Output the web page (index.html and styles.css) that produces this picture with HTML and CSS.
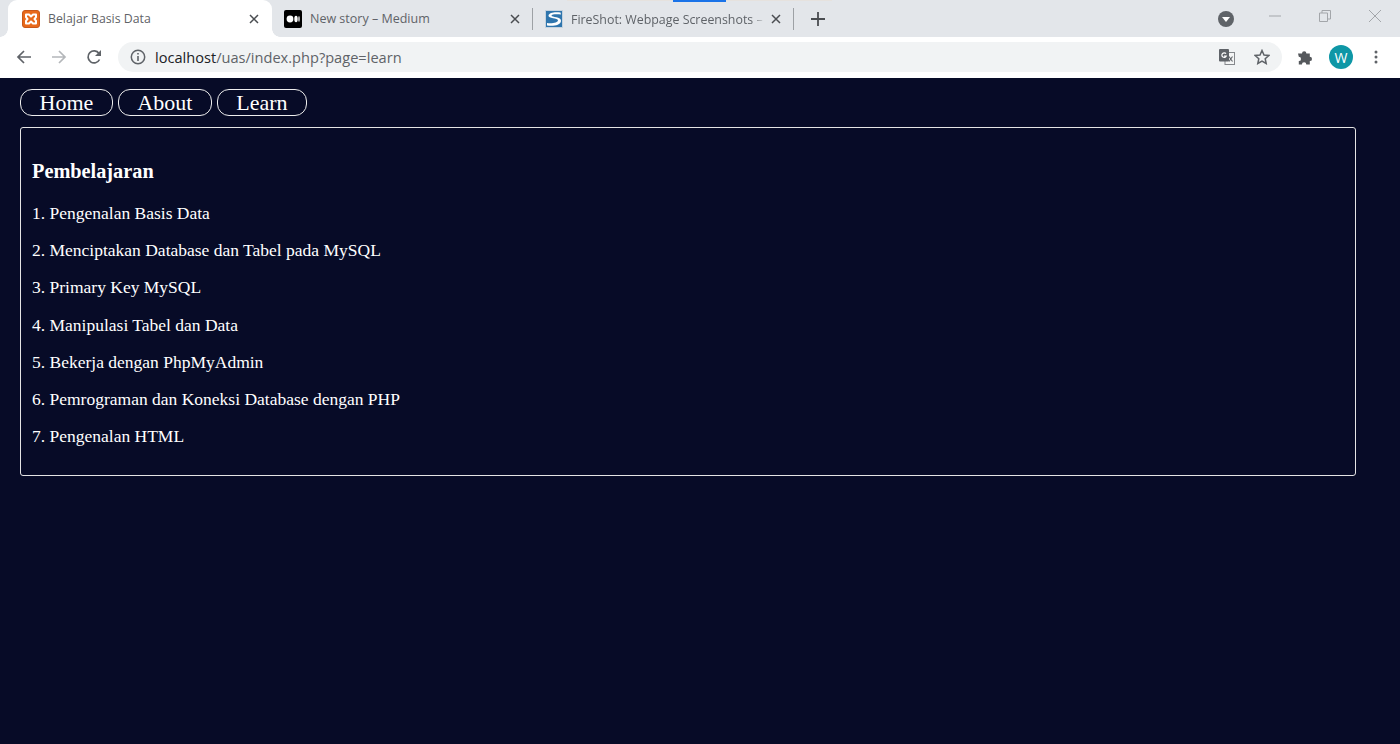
FILE: index.html
```html
<!DOCTYPE html>
<html lang="id">
<head>
<meta charset="utf-8">
<title>Belajar Basis Data</title>
<link rel="stylesheet" href="styles.css">
</head>
<body>
<header class="chrome">
  <div class="tabstrip">
    <div class="loadtrack"></div>
    <div class="loadbar"></div>
    <div class="tab active">
      <svg class="favicon" viewBox="0 0 18 18"><rect x=".5" y=".5" width="17" height="17" rx="2.500" fill="#e8691a" stroke="#c9581a"/><path d="M4 4.500h3l2 2 2-2h3v2.700L12.500 9l1.500 1.800v2.700h-3l-2-2-2 2H4v-2.700L5.500 9 4 7.200z" fill="none" stroke="#fff" stroke-width="2" stroke-linejoin="round"/></svg>
      <span class="tabtitle">Belajar Basis Data</span>
      <svg class="close" viewBox="0 0 10 10"><path d="M1 1l8 8M9 1l-8 8"/></svg>
    </div>
    <div class="tab medium">
      <svg class="favicon" viewBox="0 0 18 18"><rect width="18" height="18" rx="2" fill="#000"/><circle cx="6" cy="9" r="3.400" fill="#fff"/><ellipse cx="12" cy="9" rx="1.700" ry="3.200" fill="#fff"/><ellipse cx="15" cy="9" rx=".7" ry="2.900" fill="#fff"/></svg>
      <span class="tabtitle">New story – Medium</span>
      <svg class="close" viewBox="0 0 10 10"><path d="M1 1l8 8M9 1l-8 8"/></svg>
    </div>
    <div class="tab fireshot">
      <svg class="favicon" viewBox="0 0 18 18"><rect x=".5" y=".5" width="17" height="17" fill="#2f75ad" stroke="#c4d2de"/><path d="M15.500 2.500C10 1.500 4 2.500 3.500 5.500 3 9 13 7.500 13 10.500c0 2-6 3.500-11 2.500v2.500c6 1 13.500 0 14-4.500.5-4.500-9.500-3.500-9.500-5.500 0-1 4-1.500 9.500-1z" fill="#fff"/></svg>
      <span class="tabtitle fade">FireShot: Webpage Screenshots –</span>
      <svg class="close" viewBox="0 0 10 10"><path d="M1 1l8 8M9 1l-8 8"/></svg>
    </div>
    <svg class="newtab" viewBox="0 0 14 14"><path d="M7 0v14M0 7h14"/></svg>
    <div class="winarea">
      <span class="dropdown"><svg viewBox="0 0 16 16"><circle cx="8" cy="8" r="8" fill="#5f6368"/><path d="M4 6h8l-4 5z" fill="#fff"/></svg></span>
      <svg class="winbtn" viewBox="0 0 12 12"><path d="M0 6h12"/></svg>
      <svg class="winbtn" viewBox="0 0 12 12"><path d="M.5 3h8v8.500h-8zM3 3V.5h8.500V9H8.500"/></svg>
      <svg class="winbtn" viewBox="0 0 12 12"><path d="M0 0l12 12M12 0L0 12"/></svg>
    </div>
  </div>
  <div class="toolbar">
    <svg class="navicon" viewBox="0 0 16 16"><path d="M15 8H2M8 2L2 8l6 6" fill="none" stroke="#5f6368" stroke-width="1.700"/></svg>
    <svg class="navicon" viewBox="0 0 16 16"><path d="M1 8h13M8 2l6 6-6 6" fill="none" stroke="#b4b7ba" stroke-width="1.700"/></svg>
    <svg class="navicon" viewBox="0 0 16 16"><path d="M13.500 10.500A6 6 0 1 1 13 4.500" fill="none" stroke="#5f6368" stroke-width="1.700"/><path d="M15 1v6H9z" fill="#5f6368"/></svg>
    <div class="omnibox">
      <svg class="info" viewBox="0 0 16 16"><circle cx="8" cy="8" r="6.700" fill="none" stroke="#5f6368" stroke-width="1.500"/><path d="M8 7v5M8 4v1.600" stroke="#5f6368" stroke-width="1.600"/></svg>
      <span class="url"><span class="host">localhost</span>/uas/index.php?page=learn</span>
      <svg class="translate" viewBox="0 0 16 16"><rect x="6" y="3.500" width="9.500" height="12" fill="#f4f5f5" stroke="#85888c"/><rect x="0" y="0" width="10" height="12.500" rx="1" fill="#5f6368"/><path d="M7 4.700A2.300 2.300 0 1 0 7.300 7H5" fill="none" stroke="#fff" stroke-width="1.200"/><path d="M10 7.500l3.500 5M13.500 7.500l-3.500 5" stroke="#5f6368" stroke-width="1.100"/></svg>
      <svg class="star" viewBox="0 0 16 16"><path d="M8 1.500l2 4.500 4.800.5-3.600 3.200 1 4.800L8 12.100 3.800 14.500l1-4.800L1.200 6.500 6 6z" fill="none" stroke="#5f6368" stroke-width="1.500"/></svg>
    </div>
    <svg class="puzzle" viewBox="0 0 16 16"><path d="M0 4.500h4a2.200 2.200 0 1 1 4.400 0h3.400v3.200a2.200 2.200 0 1 1 0 4.400V15.500H8.300a2.200 2.200 0 1 0-4.400 0H.8v-3.400a2.200 2.200 0 1 0 0-4.400z" fill="#55585c"/></svg>
    <span class="avatar">W</span>
    <svg class="kebab" viewBox="0 0 4 14"><circle cx="2" cy="2" r="1.500"/><circle cx="2" cy="7" r="1.500"/><circle cx="2" cy="12" r="1.500"/></svg>
  </div>
</header>
<main class="page">
  <nav class="nav">
    <a class="pill">Home</a>
    <a class="pill">About</a>
    <a class="pill">Learn</a>
  </nav>
  <section class="card">
    <h3>Pembelajaran</h3>
    <p>1. Pengenalan Basis Data</p>
    <p>2. Menciptakan Database dan Tabel pada MySQL</p>
    <p>3. Primary Key MySQL</p>
    <p>4. Manipulasi Tabel dan Data</p>
    <p>5. Bekerja dengan PhpMyAdmin</p>
    <p>6. Pemrograman dan Koneksi Database dengan PHP</p>
    <p>7. Pengenalan HTML</p>
  </section>
</main>
</body>
</html>
```
FILE: styles.css
```css
* { box-sizing: border-box; }
html, body { margin: 0; height: 100%; overflow: hidden; }
body { background: #070b27; display: flex; flex-direction: column; }
.chrome { flex: none; height: 78px; background: #fff; font-family: "Open Sans", "Noto Sans", sans-serif; }
.tabstrip { position: relative; height: 37px; background: #e3e6ea; display: flex; align-items: flex-start; padding-left: 8px; }
.loadtrack { position: absolute; left: 567px; top: 0; width: 265px; height: 1px; background: #e6e2de; }
.loadbar { position: absolute; left: 673px; top: 0; width: 53px; height: 2px; background: #1a73e8; }
.tab { height: 37px; display: flex; align-items: center; position: relative; color: #5f6368; font-size: 12.300px; flex: none; }
.tab.active { width: 264px; background: #fff; border-radius: 9px 9px 0 0; padding: 0 13px 0 14px; }
.tab.active::before, .tab.active::after { content: ""; position: absolute; bottom: 0; width: 8px; height: 8px; }
.tab.active::before { left: -8px; background: radial-gradient(circle at 0 0, #e3e6ea 7.500px, #fff 8px); }
.tab.active::after { right: -8px; background: radial-gradient(circle at 100% 0, #e3e6ea 7.500px, #fff 8px); }
.tab.medium { width: 260px; padding: 0 12px 0 12px; font-size: 12.500px; }
.tab.fireshot { width: 262px; padding: 0 13px 0 12px; border-left: 1px solid #9da1a5; border-right: 1px solid #9da1a5; height: 22px; margin-top: 8px; }
.favicon { width: 18px; height: 18px; flex: none; margin-right: 8px; }
.tabtitle { flex: 1; white-space: nowrap; }
.tabtitle.fade { flex: none; width: 195px; margin-right: 5px; font-size: 12.400px; -webkit-mask-image: linear-gradient(to right, #000 180px, transparent 195px); mask-image: linear-gradient(to right, #000 180px, transparent 195px); }
.close { width: 10px; height: 10px; flex: none; fill: none; stroke: #4a4d51; stroke-width: 1.500; }
.newtab { width: 14px; height: 14px; margin: 12px 0 0 17px; fill: none; stroke: #4a4d51; stroke-width: 1.800; flex: none; }
.winarea { margin-left: auto; display: flex; align-items: flex-start; height: 37px; }
.dropdown { display: block; width: 16px; height: 16px; margin: 11px 35px 0 0; }
.dropdown svg { display: block; width: 16px; height: 16px; }
.winbtn { width: 12px; height: 12px; margin: 10px 38px 0 0; fill: none; stroke: #a3a6aa; stroke-width: 1; flex: none; }
.winbtn:last-child { margin-right: 19px; }
.toolbar { height: 41px; padding: 4px 0 5px 16px; display: flex; align-items: center; background: #fff; }
.navicon { width: 16px; height: 16px; margin-right: 19px; flex: none; }
.omnibox { width: 1164px; height: 30px; margin-left: -3px; border-radius: 15px; background: #f1f3f4; display: flex; align-items: center; padding: 0 12px; flex: none; }
.info { width: 16px; height: 16px; flex: none; margin-right: 9px; }
.url { flex: 1; font-size: 14.600px; color: #5f6368; }
.host { color: #202124; }
.translate { width: 16px; height: 16px; flex: none; margin-right: 19px; }
.star { width: 16px; height: 16px; flex: none; }
.puzzle { width: 16px; height: 16px; flex: none; margin-left: 16px; }
.avatar { width: 24px; height: 24px; border-radius: 50%; background: #0e97a6; color: #fff; font-size: 14px; display: flex; align-items: center; justify-content: center; margin-left: 15px; flex: none; }
.kebab { width: 4px; height: 14px; margin-left: 21px; fill: #5f6368; flex: none; }
.page { flex: 1; padding: 11px 44px 0 20px; font-family: "Liberation Serif", serif; color: #fff; }
.nav { display: flex; gap: 5px; height: 27px; }
.pill { display: block; height: 27px; padding: 0 18.500px; border: 1px solid #eee; border-radius: 12px; font-size: 22px; line-height: 26px; }
.card { margin-top: 11px; height: 349px; border: 1px solid #e4e4e4; border-radius: 3px; padding: 31px 11px 0; }
.card h3 { margin: 0 0 20px; font-size: 20.300px; line-height: 25px; font-weight: bold; }
.card p { margin: 0 0 19.200px; font-size: 17.500px; line-height: 18px; }
```
